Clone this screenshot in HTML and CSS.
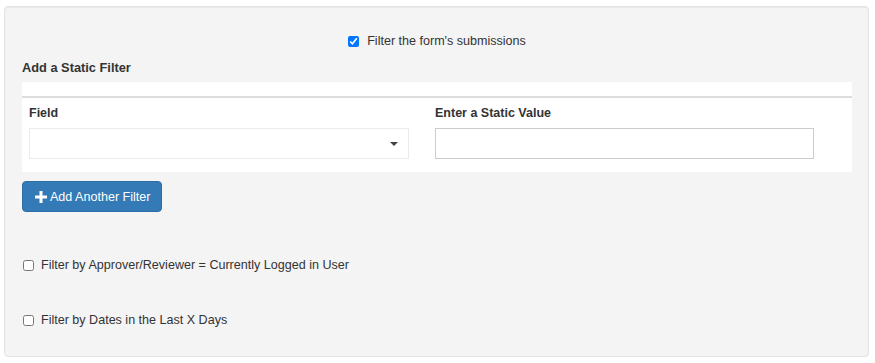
FILE: index.html
```html
<html><head>
  <title>Submission Filters</title>
  <link rel="stylesheet" href="styles.css">
</head>
<body>
<div class="well">
  <label class="filterToggle">
    <input type="checkbox" checked="">
    <span>Filter the form's submissions</span>
  </label>

  <div class="sectionTitle">Add a Static Filter</div>

  <div class="filterTable">
    <div class="tableHead"></div>
    <div class="tableRow">
      <div class="cell first">
        <div class="cellLabel">Field</div>
        <div class="fieldSelect"><span class="caret"></span></div>
      </div>
      <div class="cell">
        <div class="cellLabel">Enter a Static Value</div>
        <input type="text" class="staticValue">
      </div>
    </div>
  </div>

  <button class="addButton">
    <svg class="plusIcon" width="12" height="12" viewBox="0 0 12 12"><path d="M4.5 0h3v4.5H12v3H7.5V12h-3V7.5H0v-3h4.5z" fill="#fff"/></svg>
    Add Another Filter
  </button>

  <label class="optionRow approver">
    <input type="checkbox">
    <span>Filter by Approver/Reviewer = Currently Logged in User</span>
  </label>

  <label class="optionRow dates">
    <input type="checkbox">
    <span>Filter by Dates in the Last X Days</span>
  </label>
</div>
</body></html>
```

FILE: styles.css
```css
body {
  margin: 0;
  padding: 6px 6px 6px 4px;
  font-family: "Liberation Sans", Arial, sans-serif;
  font-size: 12.55px;
  color: #333;
  background: #fff;
}

.well {
  display: flex;
  flex-direction: column;
  align-items: flex-start;
  height: 351px;
  box-sizing: border-box;
  padding: 0 16px 0 17px;
  background-color: #f4f4f4;
  border: 1px solid #e3e3e3;
  border-radius: 4px;
  box-shadow: inset 0 1px 1px rgba(0,0,0,0.05);
}

input[type="checkbox"] {
  width: 11px;
  height: 11px;
  margin: 0 7px 0 0;
}

.filterToggle {
  align-self: center;
  display: flex;
  align-items: center;
  height: 16px;
  margin-top: 26px;
}

.filterToggle input[type="checkbox"] {
  margin-right: 8px;
}

.sectionTitle {
  font-weight: bold;
  font-size: 12.8px;
  line-height: 16px;
  margin-top: 11px;
}

.filterTable {
  align-self: stretch;
  margin-top: 6px;
  background-color: #fff;
}

.tableHead {
  height: 14px;
  border-bottom: 2px solid #ddd;
}

.tableRow {
  display: grid;
  grid-template-columns: 405px 1fr;
}

.cell {
  padding: 7px 8px 13px 8px;
}

.cell.first {
  padding-left: 7px;
}

.cellLabel {
  font-weight: bold;
  font-size: 12.5px;
  line-height: 16px;
  margin-bottom: 7px;
}

.fieldSelect {
  display: flex;
  align-items: center;
  justify-content: flex-end;
  width: 380px;
  height: 31px;
  box-sizing: border-box;
  padding-right: 10px;
  background: #fff;
  border: 1px solid #ebebeb;
}

.caret {
  width: 0;
  height: 0;
  border-left: 4px solid transparent;
  border-right: 4px solid transparent;
  border-top: 4px solid #444;
}

.staticValue {
  width: 379px;
  height: 31px;
  box-sizing: border-box;
  margin: 0;
  border: 1px solid #ccc;
  background: #fff;
}

.addButton {
  display: flex;
  align-items: center;
  gap: 3px;
  margin-top: 9px;
  width: 140px;
  height: 31px;
  padding: 0 0 0 12px;
  font-family: "Liberation Sans", Arial, sans-serif;
  font-size: 12.55px;
  color: #fff;
  background-color: #337ab7;
  border: 1px solid #2e6da4;
  border-radius: 4px;
}

.optionRow {
  display: flex;
  align-items: center;
  height: 16px;
  margin-left: 1px;
}

.optionRow.approver {
  margin-top: 45px;
}

.optionRow.dates {
  margin-top: 39px;
}
```
